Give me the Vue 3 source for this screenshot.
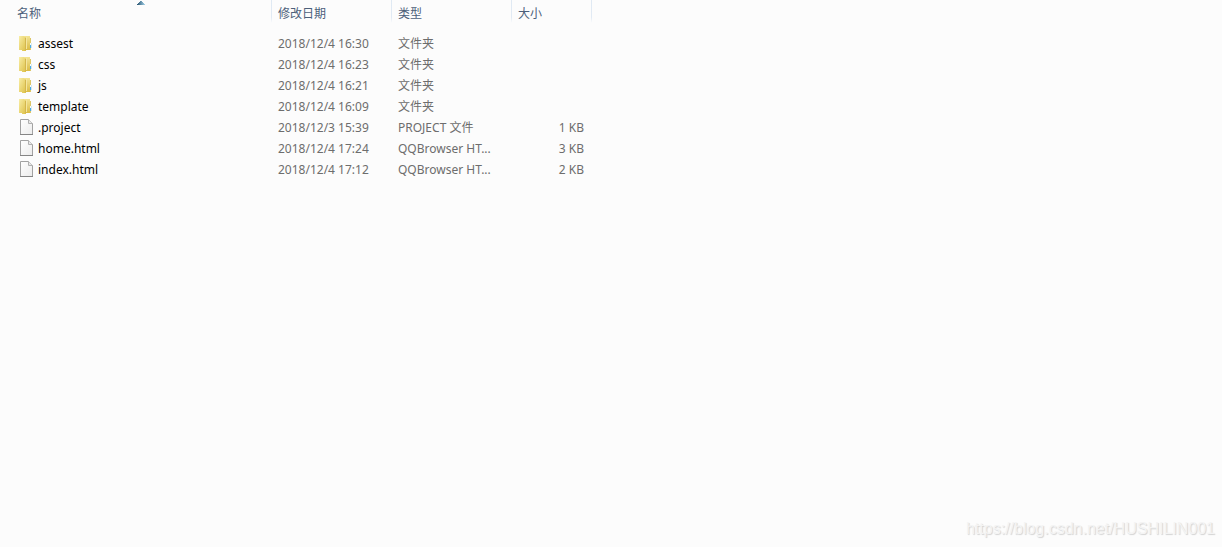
<script setup>
const files = [
  { name: 'assest', date: '2018/12/4 16:30', type: '文件夹', size: '', folder: true },
  { name: 'css', date: '2018/12/4 16:23', type: '文件夹', size: '', folder: true },
  { name: 'js', date: '2018/12/4 16:21', type: '文件夹', size: '', folder: true },
  { name: 'template', date: '2018/12/4 16:09', type: '文件夹', size: '', folder: true },
  { name: '.project', date: '2018/12/3 15:39', type: 'PROJECT 文件', size: '1 KB' },
  { name: 'home.html', date: '2018/12/4 17:24', type: 'QQBrowser HT...', size: '3 KB' },
  { name: 'index.html', date: '2018/12/4 17:12', type: 'QQBrowser HT...', size: '2 KB' },
]
</script>

<template>
  <main class="explorer">
    <svg class="defs" width="0" height="0" aria-hidden="true">
      <defs>
        <linearGradient id="folder-front" x1="0" x2="1" y1="0" y2="1">
          <stop offset="0" stop-color="#f9eea6" />
          <stop offset="1" stop-color="#dcbf45" />
        </linearGradient>
        <linearGradient id="folder-side" x1="0" x2="0" y1="0" y2="1">
          <stop offset="0" stop-color="#f3e493" />
          <stop offset="1" stop-color="#dabb45" />
        </linearGradient>
        <linearGradient id="paper" x1="0" x2="1" y1="0" y2="1">
          <stop offset="0" stop-color="#ffffff" />
          <stop offset="1" stop-color="#ececec" />
        </linearGradient>
        <linearGradient id="arrow" x1="0" x2="1" y1="0" y2="0">
          <stop offset="0" stop-color="#234f6c" />
          <stop offset="1" stop-color="#a5d3ea" />
        </linearGradient>
      </defs>
    </svg>
    <table class="list">
      <colgroup>
        <col class="c-name" /><col class="c-date" /><col class="c-type" /><col class="c-size" />
      </colgroup>
      <thead>
        <tr>
          <th scope="col" aria-sort="ascending">
            名称
            <svg class="sort" width="8" height="4" viewBox="0 0 8 4" aria-hidden="true">
              <path d="M0 4V3H1V2H2V1H3V0H5V1H6V2H7V3H8V4Z" fill="url(#arrow)" />
            </svg>
          </th>
          <th scope="col">修改日期</th>
          <th scope="col">类型</th>
          <th scope="col">大小</th>
        </tr>
      </thead>
      <tbody>
        <tr v-for="f in files" :key="f.name">
          <td class="name">
            <div class="entry">
              <svg v-if="f.folder" width="16" height="16" viewBox="0 0 16 16" aria-hidden="true">
                <path d="M1 1H12V3H13V15H3V14H1Z" fill="url(#folder-side)" />
                <path d="M1 1H6V2H8V16H4V15H1Z" fill="url(#folder-front)" />
                <path d="M7 3H8V15H7Z" fill="#d3b64e" />
                <path d="M8 2H9V14H8Z" fill="#f4e6a0" />
                <path d="M12 3H13V15H12Z" fill="#dcc668" />
                <path d="M12 8H13V10H12Z" fill="#fdfdf5" />
                <path d="M12 10H13V13H12Z" fill="#4ba9e4" />
                <path d="M13 8H14V13H13Z" fill="#d4e8ee" />
              </svg>
              <svg v-else width="16" height="16" viewBox="0 0 16 16" aria-hidden="true">
                <path d="M2.500.5H10.500L14.500 4.500V15.500H2.500Z" fill="url(#paper)" stroke="#a2a2a2" />
                <path d="M2 15.500H15" stroke="#858585" />
                <path d="M10.500.5V4.500H14.500" fill="#e8e8e8" stroke="#b0b0b0" />
              </svg>
              <span>{{ f.name }}</span>
            </div>
          </td>
          <td>{{ f.date }}</td>
          <td>{{ f.type }}</td>
          <td class="size">{{ f.size }}</td>
        </tr>
      </tbody>
    </table>
    <footer class="watermark">https://blog.csdn.net/HUSHILIN001</footer>
  </main>
</template>

<style>
body {
  background: #fcfcfc;
}
</style>

<style scoped>
.explorer {
  display: flex;
  flex-direction: column;
  align-items: flex-start;
  justify-content: space-between;
  min-height: 100vh;
  background: #fcfcfc;
  font-family: "Noto Sans", "Noto Sans CJK SC", sans-serif;
  font-size: 12px;
  color: #6d6d6d;
}
.defs {
  position: absolute;
}
.list {
  width: 592px;
  max-width: 100%;
  table-layout: fixed;
  border-collapse: separate;
  border-spacing: 0;
}
.c-name { width: 272px; }
.c-date,
.c-type { width: 120px; }
.c-size { width: 80px; }
th {
  position: relative;
  height: 23px;
  padding: 4px 6px 0;
  box-sizing: border-box;
  line-height: 18px;
  font-weight: 400;
  text-align: left;
  color: #4c607a;
  background: linear-gradient(#dfe9f3, #e1eaf4 75%, #fcfcfc) right top / 1px 23px no-repeat;
}
th:first-child {
  padding-left: 17px;
}
.sort {
  position: absolute;
  top: 1px;
  left: 137px;
}
tbody::before {
  content: "";
  display: block;
  height: 10px;
}
td {
  height: 21px;
  padding: 0 6px;
  line-height: 21px;
  white-space: nowrap;
}
td.name {
  padding-left: 18px;
  color: #000;
}
.entry {
  display: flex;
  align-items: center;
  gap: 4px;
}
.entry svg {
  margin-bottom: 2px;
}
td.size {
  padding-right: 8px;
  text-align: right;
}
.watermark {
  align-self: flex-end;
  padding: 0 7px 8px 0;
  font: 16px/20px "Liberation Sans", Arial, sans-serif;
  color: #f4f4f4;
  text-shadow: 1px 1px 1px #d2d2d2;
}
</style>
